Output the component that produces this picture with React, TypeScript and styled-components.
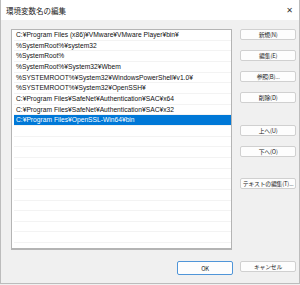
import React from "react";
import styled, { createGlobalStyle } from "styled-components";

const Global = createGlobalStyle`
  html, body { margin: 0; padding: 0; background: #f0f0f0; }
  body { width: 300px; height: 285px; overflow: hidden; }
  * { box-sizing: border-box; }
`;

const Dialog = styled.div`
  width: 300px;
  height: 284px;
  background: #f0f0f0;
  border-left: 1px solid #bcbcbc;
  border-right: 1px solid #bcbcbc;
  border-bottom: 1px solid #bcbcbc;
  display: flex;
  flex-direction: column;
  font-family: "Liberation Sans", "Noto Sans CJK JP", sans-serif;
  color: #1a1a1a;
  position: relative;
`;

const TitleBar = styled.div`
  height: 20px;
  flex: none;
  background: #ffffff;
  display: flex;
  align-items: center;
  justify-content: space-between;
  padding: 0 6px 0 5px;
`;

const Title = styled.span`
  font-family: "Noto Sans CJK JP", sans-serif;
  font-size: 7.5px;
  color: #222;
`;

const Close = styled.span`
  font-size: 8px;
  color: #333;
  font-family: "DejaVu Sans", sans-serif;
`;

const Body = styled.div`
  flex: 1;
  display: flex;
  flex-direction: column;
  padding: 9px 3px 8px 10px;
`;

const Main = styled.div`
  display: flex;
  gap: 8px;
  height: 221px;
`;

const ListBox = styled.div`
  width: 223px;
  height: 221px;
  background: #ffffff;
  border: 1px solid #b4b4b4;
  border-bottom-width: 2px;
  padding: 0 0 0 2px;
  overflow: hidden;
`;

const Row = styled.div<{ $selected?: boolean }>`
  height: 10.67px;
  line-height: 10.67px;
  font-size: 6.7px;
  padding-left: 2px;
  white-space: nowrap;
  overflow: hidden;
  border-bottom: 1px solid #f3f3f3;
  background: ${(p) => (p.$selected ? "#0078d7" : "transparent")};
  color: ${(p) => (p.$selected ? "#ffffff" : "#111111")};
`;

const ButtonCol = styled.div`
  width: 56px;
  display: flex;
  flex-direction: column;
`;

const Btn = styled.div<{ $gap?: number; $primary?: boolean }>`
  height: ${(p) => (p.$primary ? 14 : 11)}px;
  margin-top: ${(p) => p.$gap ?? 0}px;
  background: #fdfdfd;
  border: 1px solid ${(p) => (p.$primary ? "#4f95d8" : "#d0d0d0")};
  border-radius: 2px;
  display: flex;
  align-items: center;
  justify-content: center;
  font-family: "Noto Sans CJK JP", sans-serif;
  font-size: 5.8px;
  letter-spacing: -0.15px;
  color: #1a1a1a;
  white-space: nowrap;
`;

const Footer = styled.div`
  display: flex;
  justify-content: flex-end;
  gap: 7px;
  margin-top: 11px;
`;

const FooterBtn = styled(Btn)`
  width: 56px;
`;

const Grip = styled.div`
  position: absolute;
  right: 1px;
  bottom: 1px;
  width: 6px;
  height: 6px;
  background-image: radial-gradient(circle, #9a9a9a 0.6px, transparent 0.7px);
  background-size: 2px 2px;
  clip-path: polygon(100% 0, 100% 100%, 0 100%);
`;

const rows = [
  "C:¥Program Files (x86)¥VMware¥VMware Player¥bin¥",
  "%SystemRoot%¥system32",
  "%SystemRoot%",
  "%SystemRoot%¥System32¥Wbem",
  "%SYSTEMROOT%¥System32¥WindowsPowerShell¥v1.0¥",
  "%SYSTEMROOT%¥System32¥OpenSSH¥",
  "C:¥Program Files¥SafeNet¥Authentication¥SAC¥x64",
  "C:¥Program Files¥SafeNet¥Authentication¥SAC¥x32",
  "C:¥Program Files¥OpenSSL-Win64¥bin",
];

export default function App() {
  const all = [...rows, ...Array(13).fill("")];
  return (
    <>
      <Global />
      <Dialog>
        <TitleBar>
          <Title>環境変数名の編集</Title>
          <Close>✕</Close>
        </TitleBar>
        <Body>
          <Main>
            <ListBox>
              {all.map((t, i) => (
                <Row key={i} $selected={i === 8}>
                  {t || "\u00a0"}
                </Row>
              ))}
            </ListBox>
            <ButtonCol>
              <Btn>新規(N)</Btn>
              <Btn $gap={10}>編集(E)</Btn>
              <Btn $gap={10}>参照(B)...</Btn>
              <Btn $gap={10}>削除(D)</Btn>
              <Btn $gap={22}>上へ(U)</Btn>
              <Btn $gap={10}>下へ(O)</Btn>
              <Btn $gap={21}>テキストの編集(T)...</Btn>
            </ButtonCol>
          </Main>
          <Footer>
            <FooterBtn $primary>OK</FooterBtn>
            <FooterBtn>キャンセル</FooterBtn>
          </Footer>
        </Body>
        <Grip />
      </Dialog>
    </>
  );
}
